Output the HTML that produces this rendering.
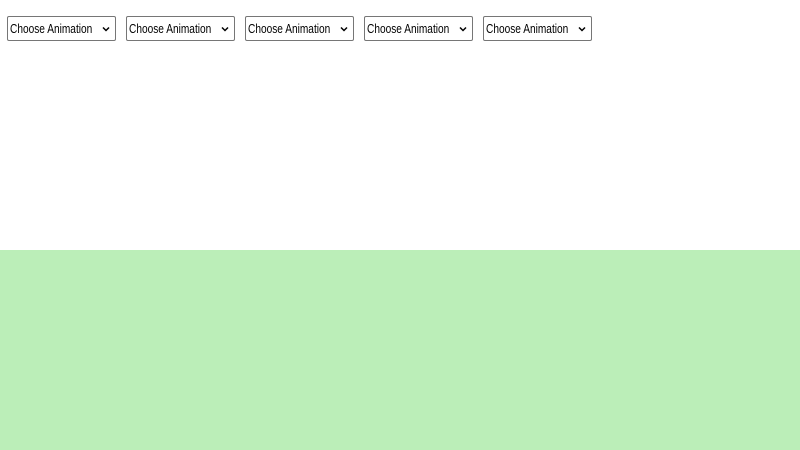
<!DOCTYPE html>
<html><head><style>
html,body{margin:0;padding:0;width:800px;height:450px;overflow:hidden;background:#fff;font-family:"Liberation Sans",sans-serif;}
.s{position:absolute;top:16px;width:107px;height:23px;border:1px solid #767676;border-radius:2px;background:#fff;font-size:13px;line-height:23px;color:#000;white-space:nowrap;}
.s span{position:absolute;left:2px;white-space:nowrap;transform:scaleX(0.78);transform-origin:0 50%;}
.s svg{position:absolute;right:5px;top:9px;}
.g{position:absolute;left:0;top:250px;width:800px;height:200px;background:#bbeeb8;}
</style></head><body>
<div class="s" style="left:7px"><span>Choose Animation</span><svg width="8" height="6" viewBox="0 0 8 6"><path d="M1 1.5l3 3 3-3" stroke="#000" stroke-width="1.5" fill="none"/></svg></div>
<div class="s" style="left:126px"><span>Choose Animation</span><svg width="8" height="6" viewBox="0 0 8 6"><path d="M1 1.5l3 3 3-3" stroke="#000" stroke-width="1.5" fill="none"/></svg></div>
<div class="s" style="left:245px"><span>Choose Animation</span><svg width="8" height="6" viewBox="0 0 8 6"><path d="M1 1.5l3 3 3-3" stroke="#000" stroke-width="1.5" fill="none"/></svg></div>
<div class="s" style="left:364px"><span>Choose Animation</span><svg width="8" height="6" viewBox="0 0 8 6"><path d="M1 1.5l3 3 3-3" stroke="#000" stroke-width="1.5" fill="none"/></svg></div>
<div class="s" style="left:483px"><span>Choose Animation</span><svg width="8" height="6" viewBox="0 0 8 6"><path d="M1 1.5l3 3 3-3" stroke="#000" stroke-width="1.5" fill="none"/></svg></div>
<div class="g"></div>
</body></html>
